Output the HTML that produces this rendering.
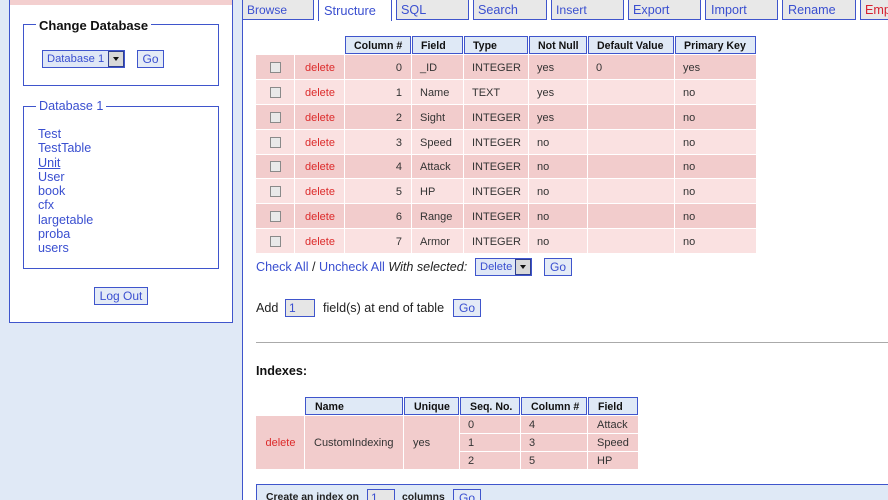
<!DOCTYPE html>
<html style="overflow:hidden;height:500px"><head><meta charset="utf-8"><style>
html,body{margin:0;padding:0}
body{width:888px;height:500px;overflow:hidden;background:#e0e9f6;font-family:"Liberation Sans",sans-serif;color:#222;font-size:12.6px}
#w{position:relative;width:888px;height:500px;overflow:hidden}
.a{position:absolute;white-space:nowrap}
a,.l{color:#3a4fd0;text-decoration:none}
.fs{position:absolute;border:1px solid #3f55cc;box-sizing:border-box;background:#fff}
.leg{position:absolute;background:#fff;padding:0 3px;white-space:nowrap;line-height:15px}
.btn{position:absolute;box-sizing:border-box;border:1px solid #3f55cc;background:#e4ebf6;color:#3a4fd0;text-align:center;font-size:12px;line-height:16px;height:18px}
.sel{position:absolute;box-sizing:border-box;border:1px solid #3f55cc;background:#dfe7f6;color:#3a4fd0;font-size:11.2px;line-height:17px;height:18px;padding-left:4px;white-space:nowrap}
.arr{position:absolute;right:0;top:0;width:16px;height:16px;background:#d8d8d8;border:1px solid #2f3f90;box-sizing:border-box}
.arr:after{content:"";position:absolute;left:4px;top:5px;border:3.5px solid transparent;border-top:4px solid #111;border-bottom:0}
.inp{position:absolute;box-sizing:border-box;border:1px solid #3f55cc;background:#e6e6e6;color:#3a4fd0;font-size:12px;line-height:16px;height:18px;padding-left:3px}
.tab{position:absolute;top:-1px;height:21px;box-sizing:border-box;border:1px solid #3f55cc;background:#e8e8e8;color:#3a4fd0;font-size:12.6px;line-height:21px;padding-left:4px;white-space:nowrap;overflow:hidden}
table{position:absolute;border-collapse:separate;border-spacing:1px;table-layout:fixed;font-size:11px;color:#333}
td,th{padding:0;overflow:hidden;white-space:nowrap}
th{background:#dfe9f6;border:1px solid #3f55cc;box-sizing:border-box;font-size:10.6px;color:#111;height:18px;line-height:14px;text-align:left;padding:2px 0 0 8px}
.ix th{padding-left:9px}
td{padding:1px 0 0 8px;box-sizing:border-box}
.o td{background:#f2cccc}
.e td{background:#fae1e1}
td.d{color:#dc2a2a;text-align:center;padding:1px 0 0 1px}
td.n{text-align:right;padding:1px 9px 0 0}
td.c{text-align:center;padding:0}
.nb{background:none!important;border:0!important}
.cb{display:inline-block;width:9px;height:9px;border:1px solid #8a8a8a;background:#e9e9e9;vertical-align:middle}
</style></head><body><div id="w">
<div class="fs" style="left:9px;top:-2px;width:224px;height:325px"></div>
<div class="a" style="left:10px;top:0;width:222px;height:5px;background:#f3cfcf"></div>

<div class="fs" style="left:23px;top:24px;width:196px;height:62px"></div>
<div class="leg" style="left:36px;top:18px;font-weight:bold;color:#111;font-size:13px">Change Database</div>
<div class="sel" style="left:42px;top:50px;width:83px">Database 1<span class="arr"></span></div>
<div class="btn" style="left:137px;top:50px;width:27px">Go</div>

<div class="fs" style="left:23px;top:106px;width:196px;height:163px"></div>
<div class="leg l" style="left:36px;top:99px">Database 1</div>
<div class="a" style="left:38px;top:127px;line-height:14.3px;color:#3a4fd0">Test<br>TestTable<br><u>Unit</u><br>User<br>book<br>cfx<br>largetable<br>proba<br>users</div>
<div class="btn" style="left:94px;top:287px;width:54px">Log Out</div>

<div class="a" style="left:242px;top:0;width:646px;height:500px;background:#fff;border-left:1px solid #3f55cc;box-sizing:border-box"></div>
<div class="tab" style="left:242px;width:72px;font-size:12px">Browse</div>
<div class="a" style="left:318px;top:-1px;width:74px;height:22px;box-sizing:border-box;border:1px solid #3f55cc;border-bottom:0;background:#fff;color:#3a4fd0;line-height:21px;padding-left:5px;font-size:12.8px">Structure</div>
<div class="tab" style="left:396px;width:73px">SQL</div>
<div class="tab" style="left:473px;width:74px">Search</div>
<div class="tab" style="left:551px;width:73px;font-size:12.3px">Insert</div>
<div class="tab" style="left:628px;width:73px">Export</div>
<div class="tab" style="left:705px;width:73px;padding-left:5px">Import</div>
<div class="tab" style="left:782px;width:74px;padding-left:5px">Rename</div>
<div class="tab" style="left:860px;width:40px;color:#d62030">Empty</div>

<table style="left:255px;top:35px;width:502px">
<colgroup><col style="width:38px"><col style="width:49px"><col style="width:66px"><col style="width:51px"><col style="width:64px"><col style="width:58px"><col style="width:86px"><col style="width:81px"></colgroup>
<tr><th class="nb"></th><th class="nb"></th><th>Column #</th><th>Field</th><th>Type</th><th>Not Null</th><th>Default Value</th><th>Primary Key</th></tr>
<tr class="o" style="height:24px"><td class="c"><span class="cb"></span></td><td class="d">delete</td><td class="n">0</td><td>_ID</td><td>INTEGER</td><td>yes</td><td>0</td><td>yes</td></tr>
<tr class="e" style="height:24px"><td class="c"><span class="cb"></span></td><td class="d">delete</td><td class="n">1</td><td>Name</td><td>TEXT</td><td>yes</td><td></td><td>no</td></tr>
<tr class="o" style="height:24px"><td class="c"><span class="cb"></span></td><td class="d">delete</td><td class="n">2</td><td>Sight</td><td>INTEGER</td><td>yes</td><td></td><td>no</td></tr>
<tr class="e" style="height:24px"><td class="c"><span class="cb"></span></td><td class="d">delete</td><td class="n">3</td><td>Speed</td><td>INTEGER</td><td>no</td><td></td><td>no</td></tr>
<tr class="o" style="height:23px"><td class="c"><span class="cb"></span></td><td class="d">delete</td><td class="n">4</td><td>Attack</td><td>INTEGER</td><td>no</td><td></td><td>no</td></tr>
<tr class="e" style="height:24px"><td class="c"><span class="cb"></span></td><td class="d">delete</td><td class="n">5</td><td>HP</td><td>INTEGER</td><td>no</td><td></td><td>no</td></tr>
<tr class="o" style="height:24px"><td class="c"><span class="cb"></span></td><td class="d">delete</td><td class="n">6</td><td>Range</td><td>INTEGER</td><td>no</td><td></td><td>no</td></tr>
<tr class="e" style="height:24px"><td class="c"><span class="cb"></span></td><td class="d">delete</td><td class="n">7</td><td>Armor</td><td>INTEGER</td><td>no</td><td></td><td>no</td></tr>
</table>

<div class="a" style="left:256px;top:260px;line-height:15px"><span class="l">Check All</span> / <span class="l">Uncheck All</span> <i>With selected:</i></div>
<div class="sel" style="left:475px;top:258px;width:57px">Delete<span class="arr"></span></div>
<div class="btn" style="left:544px;top:258px;width:28px">Go</div>

<div class="a" style="left:256px;top:301px;line-height:15px">Add</div>
<div class="inp" style="left:285px;top:299px;width:30px">1</div>
<div class="a" style="left:323px;top:301px;line-height:15px">field(s) at end of table</div>
<div class="btn" style="left:453px;top:299px;width:28px">Go</div>

<div class="a" style="left:256px;top:342px;width:632px;height:1px;background:#aaa"></div>
<div class="a" style="left:256px;top:364px;line-height:15px;font-weight:bold;color:#111">Indexes:</div>

<table class="ix" style="left:255px;top:396px;width:383px">
<colgroup><col style="width:48px"><col style="width:98px"><col style="width:55px"><col style="width:60px"><col style="width:66px"><col style="width:50px"></colgroup>
<tr><th class="nb"></th><th>Name</th><th>Unique</th><th>Seq. No.</th><th>Column #</th><th>Field</th></tr>
<tr class="o" style="height:17px"><td class="d" rowspan="3">delete</td><td rowspan="3" style="padding-left:9px">CustomIndexing</td><td rowspan="3" style="padding-left:9px">yes</td><td>0</td><td>4</td><td style="padding-left:9px">Attack</td></tr>
<tr class="o" style="height:17px"><td>1</td><td>3</td><td style="padding-left:9px">Speed</td></tr>
<tr class="o" style="height:17px"><td>2</td><td>5</td><td style="padding-left:9px">HP</td></tr>
</table>

<div class="a" style="left:256px;top:484px;width:640px;height:30px;box-sizing:border-box;background:#dfe9f6;border:1px solid #3f55cc"></div>
<div class="a" style="left:266px;top:490px;line-height:15px;font-weight:bold;color:#222;font-size:10.4px">Create an index on</div>
<div class="inp" style="left:367px;top:489px;width:28px">1</div>
<div class="a" style="left:402px;top:490px;line-height:15px;font-weight:bold;color:#222;font-size:10.4px">columns</div>
<div class="btn" style="left:453px;top:489px;width:28px">Go</div>
</div></body></html>
